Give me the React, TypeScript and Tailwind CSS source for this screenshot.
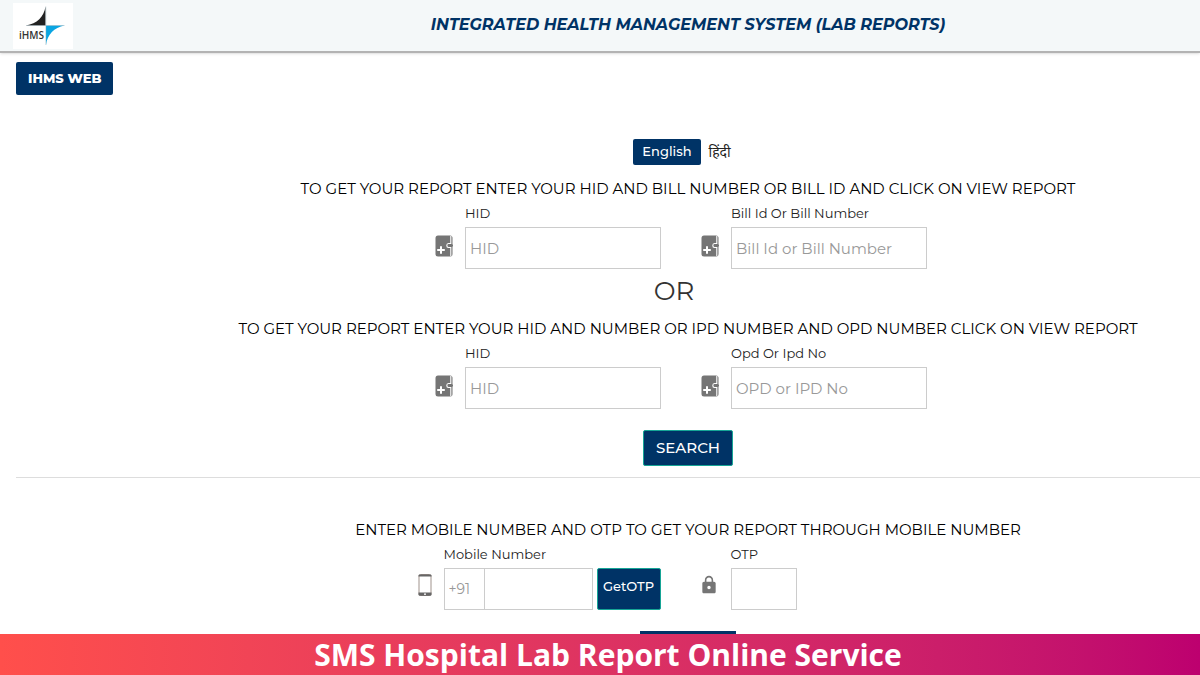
import { useState } from 'react';
import { MdLock } from 'react-icons/md';

const Logo = () => (
  <svg width="60" height="46" viewBox="0 0 60 46" className="block bg-white" role="img" aria-label="iHMS">
    <path d="M32.500 3.500V22.500H13C24 20.500 31 14 32.500 3.500Z" fill="#222222" />
    <path d="M33 22.500H51.500C41 25 34.500 31 33 42Z" fill="#0aa5e2" />
    <path d="M13 22.500H51.500M32.800 3.500V42" stroke="#9fb4be" strokeWidth="0.500" />
    <text x="6" y="36" fontFamily="Open Sans, sans-serif" fontSize="10" fontWeight="600" fill="#333333">iHMS</text>
  </svg>
);

const RecordIcon = () => (
  <svg width="18" height="22" viewBox="0 0 18 22" className="shrink-0" aria-hidden="true">
    <rect x="0.500" y="0.500" width="17" height="21" rx="2.500" fill="#757575" />
    <path d="M6 11.200V18.800M2.200 15H9.800" stroke="#fff" strokeWidth="2" />
    <path d="M15.800 1V8.500H13.500Q11.800 8.500 11.800 10.500Q11.800 12.500 13.500 12.500H15.800V21" fill="none" stroke="#fff" strokeWidth="1.100" />
    <path d="M13.500 10.500H18" stroke="#757575" strokeWidth="1.800" />
  </svg>
);

const PhoneIcon = () => (
  <svg width="14" height="22" viewBox="0 0 14 22" className="shrink-0" aria-hidden="true">
    <rect x="1" y="0.500" width="12" height="21" rx="1.500" fill="#fff" stroke="#a0938c" />
    <path d="M0.500 2V1.500Q0.500 0.500 2 0.500H12Q13.500 0.500 13.500 1.500V2.500H0.500Z" fill="#666666" />
    <path d="M0.500 18.500H13.500V20.500Q13.500 21.800 12 21.800H2Q0.500 21.800 0.500 20.500Z" fill="#666666" />
    <rect x="6" y="19.500" width="2" height="1.300" fill="#fff" />
  </svg>
);

const inputStyle = 'h-[42px] border border-[#cccccc] bg-white px-1 text-[15px] text-gray-700 placeholder:text-[#999999] outline-none';

const Heading = ({ children }: { children: string }) => (
  <h2 className="text-center text-[15px] leading-6 whitespace-nowrap text-black">{children}</h2>
);

const Field = ({ id, label, placeholder }: { id: string; label: string; placeholder: string }) => (
  <div className="flex items-end gap-3">
    <div className="flex h-[42px] items-center pb-1">
      <RecordIcon />
    </div>
    <div className="flex flex-col">
      <label htmlFor={id} className="h-[26px] text-[13px] leading-6 text-[#222222]">{label}</label>
      <input id={id} type="text" placeholder={placeholder} className={`${inputStyle} w-49`} />
    </div>
  </div>
);

export default function App() {
  const [language, setLanguage] = useState('en');

  const languageStyle = (code: string) =>
    language === code ? 'bg-[#003366] text-white px-[9px]' : 'text-[#222222] px-2';

  return (
    <div className="min-h-screen overflow-x-hidden bg-white font-['Montserrat','Inter','Noto_Sans',sans-serif]">
      <header className="flex h-[53px] items-center border-b-2 border-[#b3b3b3] bg-[#f4f8f9] shadow-sm">
        <div className="w-44 shrink-0 pl-[13px]">
          <Logo />
        </div>
        <h1 className="flex-1 pb-0.5 text-center text-base font-bold whitespace-nowrap text-[#003366] italic">
          INTEGRATED HEALTH MANAGEMENT SYSTEM (LAB REPORTS)
        </h1>
      </header>

      <main className="pt-[9px]">
        <a href="#" className="ml-4 inline-flex h-[33px] items-center rounded-xs bg-[#003366] px-3 text-[13px] font-extrabold text-white">
          IHMS WEB
        </a>

        <form className="pt-11 pl-44" onSubmit={(e) => e.preventDefault()}>
          <div className="flex justify-center pr-1">
            <button type="button" onClick={() => setLanguage('en')} className={`h-[26px] rounded-xs text-[13px] font-medium ${languageStyle('en')}`}>
              English
            </button>
            <button type="button" onClick={() => setLanguage('hi')} className={`h-[26px] rounded-xs text-sm ${languageStyle('hi')}`}>
              हिंदी
            </button>
          </div>

          <div className="mt-3">
            <Heading>TO GET YOUR REPORT ENTER YOUR HID AND BILL NUMBER OR BILL ID AND CLICK ON VIEW REPORT</Heading>
          </div>
          <div className="flex justify-center gap-10 pr-3.5">
            <Field id="hid-bill" label="HID" placeholder="HID" />
            <Field id="bill" label="Bill Id Or Bill Number" placeholder="Bill Id or Bill Number" />
          </div>

          <p className="pr-7 pb-1 text-center text-[26px] leading-[44px] text-[#333333]">OR</p>

          <Heading>TO GET YOUR REPORT ENTER YOUR HID AND NUMBER OR IPD NUMBER AND OPD NUMBER CLICK ON VIEW REPORT</Heading>
          <div className="flex justify-center gap-10 pr-3.5">
            <Field id="hid-opd" label="HID" placeholder="HID" />
            <Field id="opd" label="Opd Or Ipd No" placeholder="OPD or IPD No" />
          </div>

          <div className="mt-[21px] flex justify-center">
            <button type="submit" className="h-9 rounded-xs border border-[#16a596] bg-[#003366] px-3 text-[15px] font-medium text-white">
              SEARCH
            </button>
          </div>
        </form>

        <hr className="mt-[11px] ml-4 border-[#dddddd]" />

        <form className="pt-10 pl-44" onSubmit={(e) => e.preventDefault()}>
          <Heading>ENTER MOBILE NUMBER AND OTP TO GET YOUR REPORT THROUGH MOBILE NUMBER</Heading>
          <div className="flex justify-center gap-[38px] pr-8">
            <div className="flex items-end gap-3">
              <div className="flex h-[42px] items-center pb-2">
                <PhoneIcon />
              </div>
              <div className="flex flex-col">
                <label htmlFor="mobile" className="h-[26px] text-[13px] leading-6 text-[#222222]">Mobile Number</label>
                <div className="flex">
                  <span className="flex h-[42px] w-10 items-center border border-r-0 border-[#cccccc] px-1 text-sm text-[#999999]">+91</span>
                  <input id="mobile" type="tel" className={`${inputStyle} w-[109px]`} />
                  <button type="button" className="ml-1 h-[42px] w-16 rounded-xs border border-[#16a596] bg-[#003366] pb-1 text-[13px] font-medium text-white">
                    GetOTP
                  </button>
                </div>
              </div>
            </div>
            <div className="flex items-end gap-3">
              <div className="flex h-[42px] items-center pb-2">
                <MdLock size={20} className="text-[#757575]" aria-hidden="true" />
              </div>
              <div className="flex w-49 flex-col">
                <label htmlFor="otp" className="h-[26px] text-[13px] leading-6 text-[#222222]">OTP</label>
                <input id="otp" type="text" className={`${inputStyle} w-[66px]`} />
              </div>
            </div>
          </div>
          <div className="mt-[21px] flex justify-center">
            <button type="submit" aria-label="View report" className="h-9 w-24 bg-[#003366]" />
          </div>
        </form>
      </main>

      <footer className="fixed inset-x-0 bottom-0 flex h-[41px] items-center justify-center bg-linear-to-r from-[#ff4f4b] to-[#bd006f] pl-4 font-['Open_Sans','Noto_Sans',sans-serif] text-[30px] font-bold whitespace-nowrap text-white">
        SMS Hospital Lab Report Online Service
      </footer>
    </div>
  );
}
